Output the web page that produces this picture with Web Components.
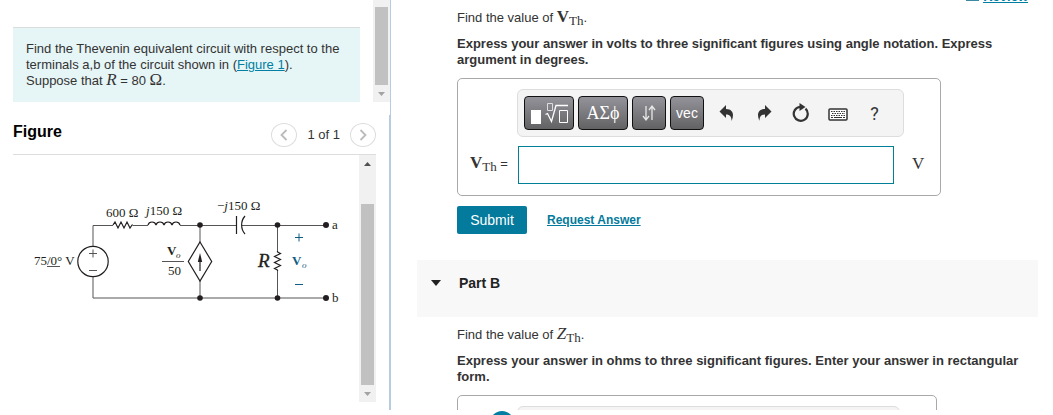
<!DOCTYPE html>
<html lang="en">
<head>
<meta charset="utf-8">
<title>Thevenin equivalent</title>
<style>
    body{
        margin: 0;
        background: #fff;
        color: #333;
        font: 13px/16px "Liberation Sans", Arial, sans-serif;
    }
</style>
</head>
<body>
<problem-page>
    <problem-sidebar slot="sidebar">
        <problem-intro slot="intro">
            Find the Thevenin equivalent circuit with respect to the terminals a,b of the circuit shown in (<a href="#figure">Figure 1</a>).<br>Suppose that <math-symbol name="R" look="italic"></math-symbol> = 80 <math-symbol name="Ω"></math-symbol>.
        </problem-intro>
        <figure-panel slot="figure" heading="Figure" count="1 of 1">
            <circuit-diagram></circuit-diagram>
        </figure-panel>
    </problem-sidebar>
    <review-link slot="review"></review-link>
    <part-question slot="parts">
        <span slot="ask">Find the value of <math-symbol name="V" sub="Th" look="bold"></math-symbol>.</span>
        <span slot="how">Express your answer in volts to three significant figures using angle notation. Express argument in degrees.</span>
        <answer-box slot="answer" unit="V">
            <math-symbol name="V" sub="Th" look="bold"></math-symbol> =
        </answer-box>
        <answer-actions slot="actions"></answer-actions>
    </part-question>
    <part-header slot="parts">Part B</part-header>
    <part-question slot="parts">
        <span slot="ask">Find the value of <math-symbol name="Z" sub="Th" look="italic"></math-symbol>.</span>
        <span slot="how">Express your answer in ohms to three significant figures. Enter your answer in rectangular form.</span>
        <answer-box slot="answer" pending></answer-box>
    </part-question>
</problem-page>

<script>
function define(name, html, setup){
    const template = document.createElement('template');
    template.innerHTML = html.trim();
    window.customElements.define(name, class extends HTMLElement{
        constructor(){
            super();
            this.attachShadow({ mode: 'open' });
        }
        connectedCallback(){
            if(this.shadowRoot.childNodes.length) return;
            this.shadowRoot.appendChild(template.content.cloneNode(true));
            if(setup) setup(this, this.shadowRoot);
        }
    });
}

define('problem-page', `
    <style>
        :host{
            display: flex;
            height: calc(100vh - 5px);
            overflow: hidden;
        }
        main{
            flex: 1;
            min-width: 0;
            padding: 0 15px 0 26px;
        }
        .bubble{
            position: fixed;
            left: 490px;
            bottom: -20px;
            width: 24px;
            height: 24px;
            border-radius: 50%;
            background: #007fa3;
        }
    </style>
    <slot name="sidebar"></slot>
    <main>
        <slot name="review"></slot>
        <slot name="parts"></slot>
    </main>
    <div class="bubble"></div>
`);

define('problem-sidebar', `
    <style>
        :host{
            display: flex;
            flex-direction: column;
            flex: 0 0 391px;
            box-sizing: border-box;
        }
        .top{
            display: flex;
            height: 102px;
            border-right: 1px solid #b8cce0;
            padding-bottom: 13px;
        }
        .top slot{
            display: block;
            flex: 1;
        }
        .bottom{
            display: flex;
            flex: 1;
            min-height: 0;
            border-right: 2px solid #b8cce0;
        }
    </style>
    <div class="top">
        <slot name="intro"></slot>
        <scroll-track from="7"></scroll-track>
    </div>
    <div class="bottom"><slot name="figure"></slot></div>
`);

define('scroll-track', `
    <style>
        :host{
            display: flex;
            flex-direction: column;
            align-items: center;
            flex: 0 0 17px;
            background: #f1f1f1;
        }
        .lead{
            box-sizing: border-box;
            padding-top: 7px;
        }
        .thumb{
            width: 13px;
            flex: 1;
            background: #c1c1c1;
        }
        .end{
            display: flex;
            align-items: center;
            justify-content: center;
            height: 17px;
        }
        svg{
            display: block;
        }
    </style>
    <div class="lead"><svg class="up" width="7" height="4" viewBox="0 0 7 4"><path d="M0 4L3.5 0L7 4z" fill="#505050"/></svg></div>
    <div class="thumb"></div>
    <div class="end"><svg width="7" height="4" viewBox="0 0 7 4"><path d="M0 0h7L3.5 4z" fill="#a3a3a3"/></svg></div>
`, (host, root) => {
    root.querySelector('.lead').style.height = host.getAttribute('from') + 'px';
    if(!host.hasAttribute('up')) root.querySelector('.up').remove();
});

define('problem-intro', `
    <style>
        :host{
            display: block;
            margin: 27px 13px 0;
            padding: 13px;
            border-top: 1px solid #d9dddd;
            background: #e6f5f6;
        }
        ::slotted(a){
            color: #007fa3;
        }
    </style>
    <slot></slot>
`);

define('math-symbol', `
    <style>
        :host{
            font: 17px "Liberation Serif", "Times New Roman", serif;
            line-height: 0;
        }
        :host([look="bold"]) .name{
            font-weight: bold;
        }
        :host([look="italic"]) .name{
            font-style: italic;
        }
        sub{
            font-size: 13px;
            line-height: 0;
            vertical-align: -3px;
        }
    </style>
    <span class="name"></span><sub></sub>
`, (host, root) => {
    root.querySelector('.name').textContent = host.getAttribute('name');
    root.querySelector('sub').textContent = host.getAttribute('sub') || '';
});

define('figure-panel', `
    <style>
        :host{
            display: flex;
            flex-direction: column;
            flex: 1;
            margin: 0 13px 8px;
            min-width: 0;
        }
        header{
            display: flex;
            align-items: center;
            gap: 10px;
            height: 39px;
            border-bottom: 1px solid #ddd;
        }
        h2{
            flex: 1;
            margin: 0 0 5px;
            font-size: 16px;
            color: #000;
        }
        button{
            display: flex;
            align-items: center;
            justify-content: center;
            width: 26px;
            height: 24px;
            padding: 0;
            border: 1px solid #ddd;
            border-radius: 50%;
            background: #fff;
        }
        .view{
            display: flex;
            flex: 1;
            min-height: 0;
        }
        .drawing{
            flex: 1;
            min-width: 0;
            padding-top: 35px;
        }
    </style>
    <header>
        <h2></h2>
        <button aria-label="Previous figure"><svg width="8" height="12" viewBox="0 0 8 12"><path d="M6.5 1L1.5 6l5 5" fill="none" stroke="#bbb" stroke-width="1.8"/></svg></button>
        <span></span>
        <button aria-label="Next figure"><svg width="8" height="12" viewBox="0 0 8 12"><path d="M1.5 1L6.5 6l-5 5" fill="none" stroke="#bbb" stroke-width="1.8"/></svg></button>
    </header>
    <div class="view">
        <div class="drawing"><slot></slot></div>
        <scroll-track from="49" up></scroll-track>
    </div>
`, (host, root) => {
    root.querySelector('h2').textContent = host.getAttribute('heading');
    root.querySelector('span').textContent = host.getAttribute('count');
});

define('circuit-diagram', `
    <style>
        :host{
            display: block;
        }
        svg{
            display: block;
            max-width: 100%;
        }
        text{
            font: 13px "Liberation Serif", "Times New Roman", serif;
            fill: #231f20;
        }
        .wire{
            fill: none;
            stroke: #555;
            stroke-width: 1;
        }
        .part{
            fill: none;
            stroke: #231f20;
            stroke-width: 1.2;
        }
        .bold{
            font-weight: bold;
        }
        .sub{
            font-size: 9px;
            font-style: italic;
        }
        .i{
            font-style: italic;
        }
        .resistance{
            font-size: 19px;
            font-style: italic;
            stroke: #231f20;
            stroke-width: .4;
        }
        .blue{
            fill: #0f5d84;
        }
    </style>
    <svg width="346" height="120" viewBox="0 0 346 120" role="img" aria-label="Circuit">
        <path class="wire" d="M80 56V35.5H100M120 35.5H135M167 35.5H223M229 35.5H312M80 87V108H312M187 35V52M187 91V108M264.5 35V62M264.5 81V108"/>
        <path class="part" d="M100 35l2-3 3 6 3-6 3 6 3-6 3 6 2-3h1"/>
        <path class="part" d="M135 35c1-4 7-4 8 0c1-4 7-4 8 0c1-4 7-4 8 0c1-4 7-4 8 0"/>
        <circle class="part" cx="80" cy="71.5" r="15.2"/>
        <path class="wire" d="M76 63.5h8M80 59.5v8M76 80.5h8M34 76.5h13M149 71.5h22"/>
        <path class="part" d="M187 52l11.7 19.5L187 91l-11.7-19.5z"/>
        <path class="part" d="M187 81V70"/>
        <path d="M187 63l2.2 9h-4.4z" fill="#231f20"/>
        <path class="part" d="M223.5 26v18M232 26c-4.5 5-4.5 13 0 18"/>
        <path class="part" d="M264.5 61v1l3 1.5-6 3 6 3-6 3 6 3-6 3 3 1.5v1"/>
        <g fill="#231f20">
            <circle cx="187" cy="35" r="2.8"/><circle cx="187" cy="108" r="2.8"/>
            <circle cx="264.5" cy="35" r="2.8"/><circle cx="264.5" cy="108" r="2.8"/>
            <circle cx="313" cy="35" r="3"/><circle cx="313" cy="108" r="3"/>
        </g>
        <path d="M282 47.5h8M286 43.5v8M282 94.5h8" stroke="#0f5d84" fill="none"/>
        <text x="93" y="27">600 Ω</text>
        <text x="133" y="25"><tspan class="i">j</tspan>150 Ω</text>
        <text x="204" y="20">−<tspan class="i">j</tspan>150 Ω</text>
        <text x="21" y="75">75/0° V</text>
        <text x="154" y="65" class="bold">V</text>
        <text x="163" y="68" class="sub">o</text>
        <text x="155" y="85">50</text>
        <text x="245" y="77" class="resistance">R</text>
        <text x="279" y="75" class="bold blue">V</text>
        <text x="289" y="78" class="sub blue">o</text>
        <text x="319" y="39">a</text>
        <text x="319" y="112">b</text>
    </svg>
`);

define('review-link', `
    <style>
        :host{
            display: flex;
            justify-content: flex-end;
            margin: -11px 0 -1px;
            padding-right: 10px;
        }
        a{
            display: flex;
            gap: 4px;
            color: #007fa3;
            font-weight: bold;
        }
        span{
            text-decoration: underline;
        }
    </style>
    <a href="#review"><svg width="13" height="12" viewBox="0 0 13 12"><path d="M0 1h13v11H0z" fill="#3b8ba3"/></svg><span>Review</span></a>
`);

define('part-question', `
    <style>
        :host{
            display: block;
            padding: 6px 19px 0 40px;
        }
        p{
            margin: 0 0 10px;
        }
        .how{
            font-weight: bold;
        }
    </style>
    <p><slot name="ask"></slot></p>
    <p class="how"><slot name="how"></slot></p>
    <slot name="answer"></slot>
    <slot name="actions"></slot>
`);

define('answer-box', `
    <style>
        :host{
            display: block;
            box-sizing: border-box;
            max-width: 484px;
            padding: 10px 10px 11px;
            border: 1px solid #a9a9a9;
            border-radius: 5px;
        }
        :host([pending]){
            max-width: 480px;
        }
        .tools{
            margin: 0 26px 9px 49px;
        }
        .row{
            display: flex;
            align-items: center;
        }
        label{
            flex: 0 0 50px;
            box-sizing: border-box;
            padding: 0 0 2px 2px;
            white-space: nowrap;
        }
        input{
            flex: 1;
            min-width: 0;
            box-sizing: border-box;
            height: 38px;
            padding: 0 8px;
            border: 1px solid #007f96;
            background: #fff;
            font: inherit;
        }
        .unit{
            flex: 0 0 36px;
            box-sizing: border-box;
            padding: 0 0 2px 18px;
            font: 17px/20px "Liberation Serif", "Times New Roman", serif;
        }
    </style>
    <math-toolbar class="tools"></math-toolbar>
    <div class="row">
        <label for="value"><slot></slot></label>
        <input id="value" type="text">
        <span class="unit"></span>
    </div>
`, (host, root) => {
    // a pending box has no field yet, only the bare frame of its toolbar
    if(host.hasAttribute('pending')){
        root.querySelector('.row').remove();
        root.querySelector('math-toolbar').setAttribute('bare', '');
        return;
    }
    root.querySelector('.unit').textContent = host.getAttribute('unit');
});

define('math-toolbar', `
    <style>
        :host{
            display: flex;
            align-items: center;
            box-sizing: border-box;
            height: 48px;
            padding: 0 6px;
            border: 1px solid #ddd;
            border-radius: 6px;
            background: #f4f4f4;
        }
        button{
            display: flex;
            align-items: center;
            justify-content: center;
            flex: 0 0 37px;
            height: 34px;
            padding: 0;
            border: 0;
            background: none;
            color: #333;
            font: 18px Roboto, "Liberation Sans", sans-serif;
        }
        :host([bare]) button{
            display: none;
        }
        .dark{
            flex-basis: 34px;
            margin-right: 4px;
            border: 1px solid #111;
            border-radius: 4px;
            background: linear-gradient(#94939a, #626163);
            color: #fff;
            font: 14px "Liberation Sans", Arial, sans-serif;
        }
        .wide{
            flex-basis: 50px;
        }
        .greek{
            font: 18px "Liberation Serif", "Times New Roman", serif;
        }
        svg{
            display: block;
        }
    </style>
    <button class="dark wide" aria-label="Templates"><svg width="38" height="24" viewBox="0 0 38 24" fill="none" stroke="#fff"><path d="M1 9h10v14H1z" fill="#fff" stroke="none"/><path d="M17.5 2.5h5v7h-5z" stroke="#ddd"/><path d="M15.5 13.5l2-1 4 8 4.5-16h12" stroke-width="1.3"/><path d="M29.5 9.5h8v12h-8z"/></svg></button>
    <button class="dark wide greek">ΑΣϕ</button>
    <button class="dark" aria-label="Subscripts and arrows"><svg width="14" height="18" viewBox="0 0 14 18" fill="none" stroke="#e8e8e8" stroke-width="1.3"><path d="M4 2v13M1 12l3 4 3-4M10 16V3M7 6l3-4 3 4"/></svg></button>
    <button class="dark">vec</button>
    <button aria-label="Undo"><svg width="16" height="18" viewBox="0 0 16 18"><path d="M7 1v4c5 0 7 3 7 6 0 2-.5 4-1.5 6 .2-4-1.5-6.5-5.5-6.5V14L.5 7.5z" fill="#333"/></svg></button>
    <button aria-label="Redo"><svg width="16" height="18" viewBox="0 0 16 18"><path d="M9 1v4c-5 0-7 3-7 6 0 2 .5 4 1.5 6-.2-4 1.5-6.5 5.5-6.5V14l6.5-6.5z" fill="#333"/></svg></button>
    <button aria-label="Reset"><svg width="18" height="20" viewBox="0 0 18 20"><path d="M13.5 5.6A7 7 0 1 1 8 3.8" fill="none" stroke="#333" stroke-width="2.2"/><path d="M7.5 0l6 4-6 4z" fill="#333"/></svg></button>
    <button aria-label="Keyboard"><svg width="20" height="16" viewBox="0 0 20 16"><rect x="1" y="4" width="18" height="11" rx="1" fill="#fff" stroke="#333" stroke-width="1.5"/><path d="M3 6.5h14M4 8.5h13M3 10.5h14" stroke="#333" stroke-dasharray="1.5 1"/><path d="M3 12.5h2M6 12.5h8M15 12.5h2" stroke="#333"/></svg></button>
    <button aria-label="Help">?</button>
`);

define('answer-actions', `
    <style>
        :host{
            display: flex;
            align-items: center;
            gap: 20px;
            padding: 10px 0 26px;
        }
        button{
            width: 70px;
            height: 28px;
            padding: 0;
            border: 0;
            border-radius: 2px;
            background: #047a9c;
            color: #fff;
            font: 14px "Liberation Sans", Arial, sans-serif;
        }
        a{
            color: #047a9c;
            font-size: 12px;
            font-weight: bold;
        }
    </style>
    <button>Submit</button>
    <a href="#answer">Request Answer</a>
`);

define('part-header', `
    <style>
        :host{
            display: block;
            margin-bottom: 4px;
            background: #f8f8f8;
        }
        button{
            display: flex;
            align-items: center;
            gap: 18px;
            width: 100%;
            height: 57px;
            padding: 0 14px 12px;
            border: 0;
            background: none;
            color: #222;
            font: bold 14px "Liberation Sans", Arial, sans-serif;
        }
    </style>
    <button aria-expanded="true"><svg width="10" height="6" viewBox="0 0 10 6"><path d="M0 0h10L5 6z" fill="#222"/></svg><slot></slot></button>
`);
</script>
</body>
</html>
